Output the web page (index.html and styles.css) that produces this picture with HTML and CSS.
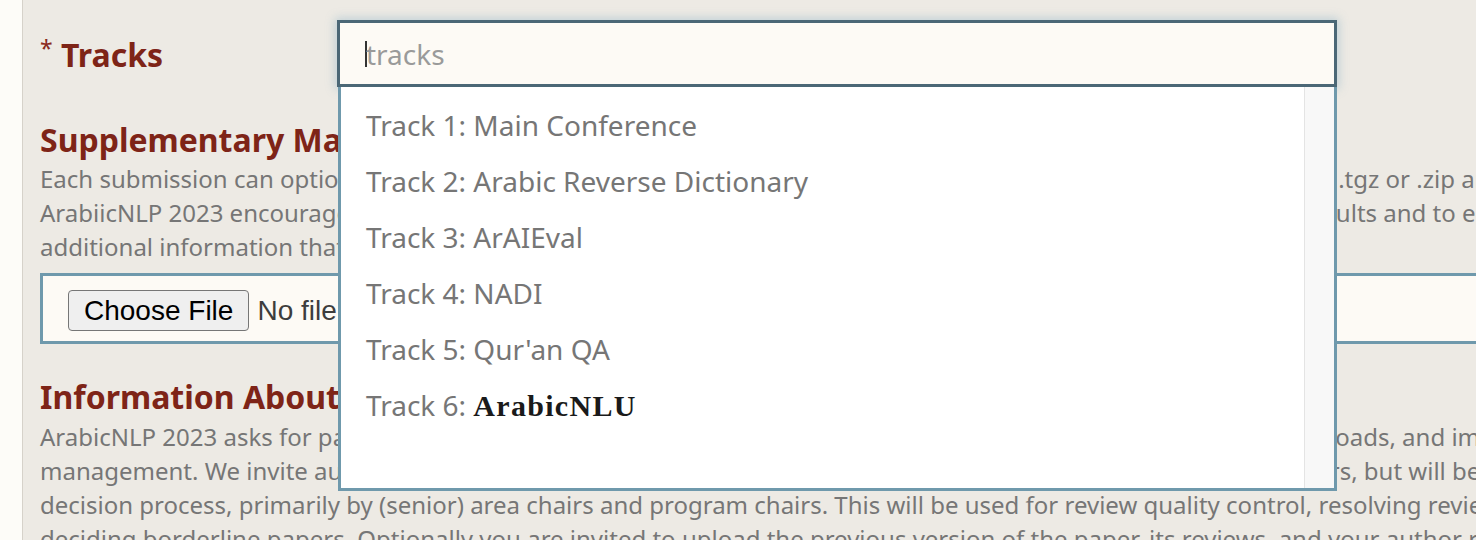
FILE: index.html
```html
<!DOCTYPE html>
<html lang="en">
<head>
<meta charset="utf-8">
<title>Tracks</title>
<link rel="stylesheet" href="styles.css">
</head>
<body>
<div class="page">
  <div class="gutter"></div>
  <main class="main">
    <div class="field-row">
      <div class="label"><span class="req">*</span> Tracks</div>
      <div class="select">
        <div class="select-input"><span class="caret"></span><span class="placeholder">tracks</span></div>
        <div class="dropdown">
          <ul class="options">
            <li>Track 1: Main Conference</li>
            <li>Track 2: Arabic Reverse Dictionary</li>
            <li>Track 3: ArAIEval</li>
            <li>Track 4: NADI</li>
            <li>Track 5: Qur'an QA</li>
            <li>Track 6: <b class="serif">ArabicNLU</b></li>
          </ul>
          <div class="scrollbar"></div>
        </div>
      </div>
    </div>

    <h2 class="heading heading-supp">Supplementary Materials</h2>
    <p class="para para-supp">
      <span class="line">Each submission can optionally be accompanied by a single .tgz or .zip archive containing software, and/or a single .tgz or .zip archive containing data.</span>
      <span class="line">ArabiicNLP 2023 encourages the submission of these supplementary materials to improve the reproducibility of results and to enable authors to provide</span>
      <span class="line">additional information that does not fit in the paper.</span>
    </p>
    <div class="file-box">
      <button class="file-btn" type="button">Choose File</button>
      <span class="file-status">No file chosen</span>
    </div>

    <h2 class="heading heading-info">Information About Previous Submission</h2>
    <p class="para para-info">
      <span class="line">ArabicNLP 2023 asks for papers' previous submission history, including all reviews, meta-reviews, rebuttals, and uploads, and improvements/changes made (if applicable)</span>
      <span class="line">management. We invite authors to provide this information. This information will not be shared with other reviewers, but will be used in the</span>
      <span class="line">decision process, primarily by (senior) area chairs and program chairs. This will be used for review quality control, resolving reviewer disagreements and</span>
      <span class="line">deciding borderline papers. Optionally you are invited to upload the previous version of the paper, its reviews, and your author response.</span>
    </p>
  </main>
</div>
</body>
</html>
```

FILE: styles.css
```css
html, body {
  margin: 0;
  padding: 0;
  height: 540px;
  overflow: hidden;
  background: #edeae4;
}

.page {
  display: flex;
  height: 540px;
  font-family: "Noto Sans", "Open Sans", sans-serif;
}

.gutter {
  flex: 0 0 22px;
  background: #fdfcf8;
  border-right: 1px solid #d6d2ca;
}

.main {
  flex: 1 1 auto;
  min-width: 0;
  padding: 20px 0 0 17px;
  background: #edeae4;
}

.field-row {
  display: flex;
  align-items: center;
  height: 67px;
}

.label {
  width: 297px;
  flex: 0 0 297px;
  font-size: 32px;
  font-weight: 700;
  color: #7e2417;
  white-space: nowrap;
}

.req {
  font-size: 23px;
  font-weight: 400;
  vertical-align: 10px;
  color: #8a2a1d;
}

.select {
  position: relative;
  width: 1000px;
  flex: 0 0 1000px;
  height: 67px;
  z-index: 5;
}

.select-input {
  box-sizing: border-box;
  height: 67px;
  border: 3px solid #4b6776;
  background: #fdfaf5;
  box-shadow: 0 0 9px 2px rgba(110, 160, 190, 0.35);
  display: flex;
  align-items: center;
  padding-left: 25px;
  font-size: 28px;
}

.caret {
  width: 2px;
  height: 26px;
  background: #333;
  margin-right: -1px;
}

.placeholder {
  color: #9a9a9a;
}

.dropdown {
  position: absolute;
  left: 1px;
  top: 67px;
  width: 999px;
  height: 404px;
  box-sizing: border-box;
  border: 3px solid #6f99ac;
  border-top: 0;
  background: #fff;
  display: flex;
}

.options {
  list-style: none;
  margin: 0;
  padding: 10px 0 0 25px;
  flex: 1 1 auto;
}

.options li {
  height: 56px;
  line-height: 56px;
  font-size: 28px;
  color: #767676;
  white-space: nowrap;
}

.serif {
  font-family: "Liberation Serif", "Times New Roman", serif;
  font-weight: 700;
  color: #1a1a1a;
  font-size: 30px;
  letter-spacing: 1.3px;
}

.scrollbar {
  flex: 0 0 29px;
  background: #f8f8f8;
  border-left: 1px solid #e4e4e4;
}

.heading {
  margin: 0;
  font-size: 32px;
  font-weight: 700;
  color: #7e2417;
  white-space: nowrap;
  line-height: 40px;
}

.heading-supp {
  margin-top: 33px;
}

.heading-info {
  margin-top: 33px;
}

.para {
  margin: 0;
  font-size: 24px;
  line-height: 34px;
  color: #767676;
}

.para-supp {
  margin-top: 2px;
}

.para-info {
  margin-top: 3px;
}

.line {
  display: block;
  white-space: nowrap;
}

.file-box {
  box-sizing: border-box;
  width: 1500px;
  height: 71px;
  margin-top: 9px;
  border: 3px solid #6f99ac;
  background: #fdfaf5;
  display: flex;
  align-items: center;
  padding: 4px 0 0 25px;
}

.file-btn {
  font-family: "Liberation Sans", Arial, sans-serif;
  font-size: 28px;
  color: #000;
  background: #efefef;
  border: 1px solid #767676;
  border-radius: 4px;
  height: 41px;
  padding: 0 15px;
  margin: 0;
}

.file-status {
  font-family: "Liberation Sans", Arial, sans-serif;
  font-size: 28px;
  color: #3d3d3d;
  margin-left: 8px;
}
```
